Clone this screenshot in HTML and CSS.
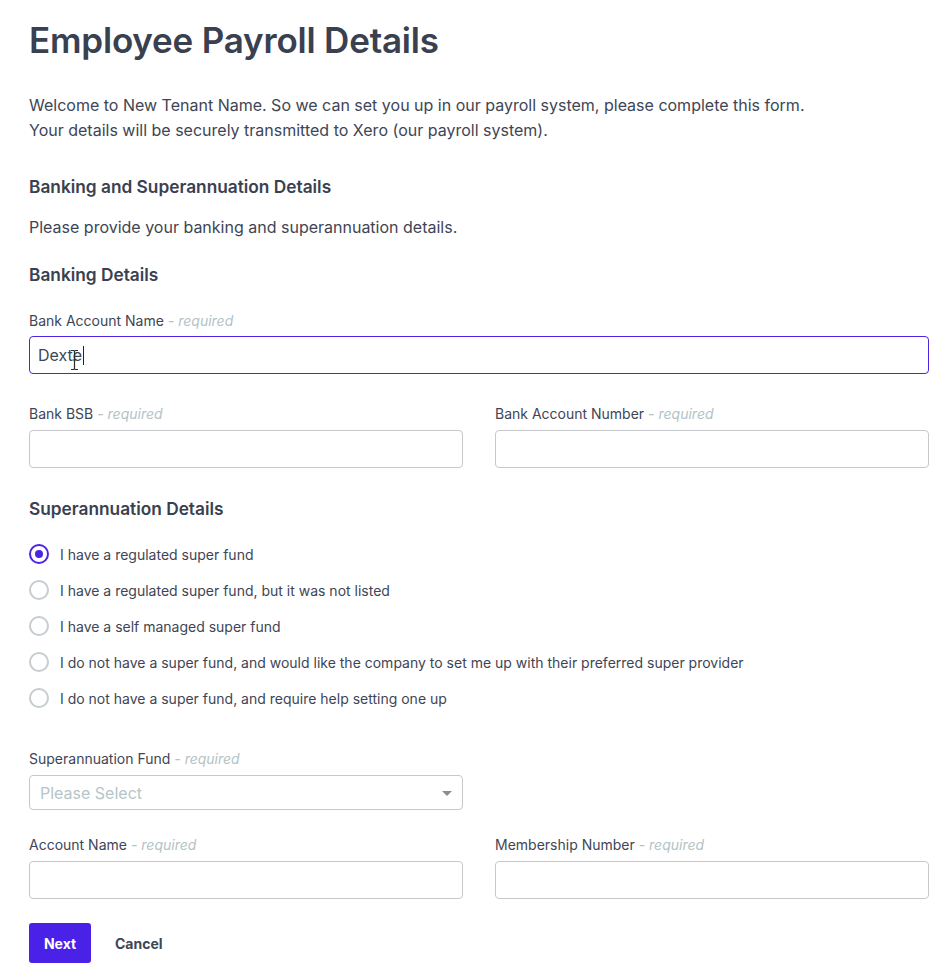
FILE: index.html
```html
<!DOCTYPE html>
<html>
<head>
<meta charset="utf-8">
<link rel="stylesheet" href="styles.css">
</head>
<body>
<main class="page">
  <h1 class="title">Employee Payroll Details</h1>
  <p class="intro">Welcome to New Tenant Name. So we can set you up in our payroll system, please complete this form.<br>Your details will be securely transmitted to Xero (our payroll system).</p>
  <h2 class="section">Banking and Superannuation Details</h2>
  <p class="lead">Please provide your banking and superannuation details.</p>
  <h3 class="sub">Banking Details</h3>

  <div class="field">
    <label class="label">Bank Account Name <span class="req">- required</span></label>
    <div class="input focused"><span class="val">Dexte</span><span class="caret"></span>
      <svg class="ibeam" width="9" height="22" viewBox="0 0 9 22"><path d="M1 1.5 H3.5 Q4.5 1.5 4.5 3 V19 Q4.5 20.5 3.5 20.5 H1 M8 1.5 H5.5 Q4.5 1.5 4.5 3 M4.5 19 Q4.5 20.5 5.5 20.5 H8 M2.5 11 H6.5" fill="none" stroke="#2b2b2b" stroke-width="1.2"/></svg>
    </div>
  </div>

  <div class="row bank-row">
    <div class="field">
      <label class="label">Bank BSB <span class="req">- required</span></label>
      <div class="input"></div>
    </div>
    <div class="field">
      <label class="label">Bank Account Number <span class="req">- required</span></label>
      <div class="input"></div>
    </div>
  </div>

  <h3 class="sub super">Superannuation Details</h3>
  <ul class="radios">
    <li class="radio-row"><span class="radio checked"></span>I have a regulated super fund</li>
    <li class="radio-row"><span class="radio"></span>I have a regulated super fund, but it was not listed</li>
    <li class="radio-row"><span class="radio"></span>I have a self managed super fund</li>
    <li class="radio-row"><span class="radio"></span>I do not have a super fund, and would like the company to set me up with their preferred super provider</li>
    <li class="radio-row"><span class="radio"></span>I do not have a super fund, and require help setting one up</li>
  </ul>

  <div class="row fund-row">
    <div class="field">
      <label class="label">Superannuation Fund <span class="req">- required</span></label>
      <div class="select"><span class="placeholder">Please Select</span><span class="arrow"></span></div>
    </div>
    <div></div>
  </div>

  <div class="row acct-row">
    <div class="field">
      <label class="label">Account Name <span class="req">- required</span></label>
      <div class="input"></div>
    </div>
    <div class="field">
      <label class="label">Membership Number <span class="req">- required</span></label>
      <div class="input"></div>
    </div>
  </div>

  <div class="actions">
    <button class="btn-primary">Next</button>
    <button class="btn-link">Cancel</button>
  </div>
</main>
</body>
</html>
```

FILE: styles.css
```css
html, body {
  margin: 0;
  padding: 0;
  background: #ffffff;
}
body {
  font-family: Inter, "Noto Sans", sans-serif;
  color: #3e4555;
}
.page {
  width: 900px;
  padding: 18px 0 0 29px;
}
.title {
  margin: 0;
  font-size: 35px;
  line-height: 44px;
  font-weight: 600;
  color: #394050;
  letter-spacing: -0.2px;
}
.intro {
  margin: 31px 0 0;
  font-size: 16px;
  line-height: 25px;
  color: #3e4555;
}
.section {
  margin: 32px 0 0;
  font-size: 17.3px;
  line-height: 24px;
  font-weight: 600;
  color: #394050;
}
.lead {
  margin: 16px 0 0;
  font-size: 16px;
  line-height: 24px;
}
.sub {
  margin: 24px 0 0;
  font-size: 17.3px;
  line-height: 24px;
  font-weight: 600;
  color: #394050;
}
.field {
  display: flex;
  flex-direction: column;
}
.label {
  display: block;
  margin-top: 24px;
  font-size: 14px;
  line-height: 20px;
  color: #3e4555;
}
.req {
  font-style: italic;
  color: #b3c3c6;
}
.input {
  position: relative;
  box-sizing: border-box;
  height: 38px;
  margin-top: 5px;
  border: 1px solid #c6c8cb;
  border-radius: 4px;
  display: flex;
  align-items: center;
  padding-left: 8px;
  font-size: 16px;
  color: #3e4555;
}
.input.focused {
  border-color: #4b24e4;
}
.caret {
  display: inline-block;
  width: 1px;
  height: 19px;
  background: #222;
  margin-left: 1px;
}
.ibeam {
  position: absolute;
  left: 40px;
  top: 12px;
}
.row {
  display: grid;
  grid-template-columns: 1fr 1fr;
  column-gap: 32px;
}
.row .label {
  margin-top: 0;
}
.bank-row {
  margin-top: 30px;
}
.bank-row .input {
  margin-top: 6px;
}
.super {
  margin-top: 29px;
}
.radios {
  list-style: none;
  margin: 15px 0 0;
  padding: 0;
}
.radio-row {
  display: flex;
  align-items: center;
  height: 36px;
  font-size: 14px;
  color: #3e4555;
}
.radio {
  box-sizing: border-box;
  width: 20px;
  height: 20px;
  border: 2px solid #c5cdd0;
  border-radius: 50%;
  margin-right: 11px;
  flex: none;
  display: flex;
  align-items: center;
  justify-content: center;
}
.radio.checked {
  border-color: #4b24e4;
}
.radio.checked::after {
  content: "";
  width: 8px;
  height: 8px;
  border-radius: 50%;
  background: #4b24e4;
}
.fund-row {
  margin-top: 33px;
}
.select {
  box-sizing: border-box;
  height: 35px;
  margin-top: 6px;
  border: 1px solid #c6c8cb;
  border-radius: 4px;
  display: flex;
  align-items: center;
  justify-content: space-between;
  padding: 0 10px 0 10px;
  font-size: 16px;
}
.placeholder {
  color: #b6c5c8;
}
.arrow {
  width: 0;
  height: 0;
  border-left: 5px solid transparent;
  border-right: 5px solid transparent;
  border-top: 5px solid #8a8d92;
  margin-top: 2px;
}
.acct-row {
  margin-top: 25px;
}
.acct-row .input {
  margin-top: 6px;
}
.actions {
  display: flex;
  align-items: center;
  gap: 24px;
  margin-top: 24px;
}
.btn-primary {
  height: 40px;
  width: 62px;
  border: none;
  border-radius: 3px;
  background: #4a21e6;
  color: #ffffff;
  font-family: Inter, sans-serif;
  font-size: 14px;
  font-weight: 700;
  padding: 0;
}
.btn-link {
  border: none;
  background: none;
  padding: 0;
  font-family: Inter, sans-serif;
  font-size: 14px;
  font-weight: 700;
  color: #3e4555;
}
```
